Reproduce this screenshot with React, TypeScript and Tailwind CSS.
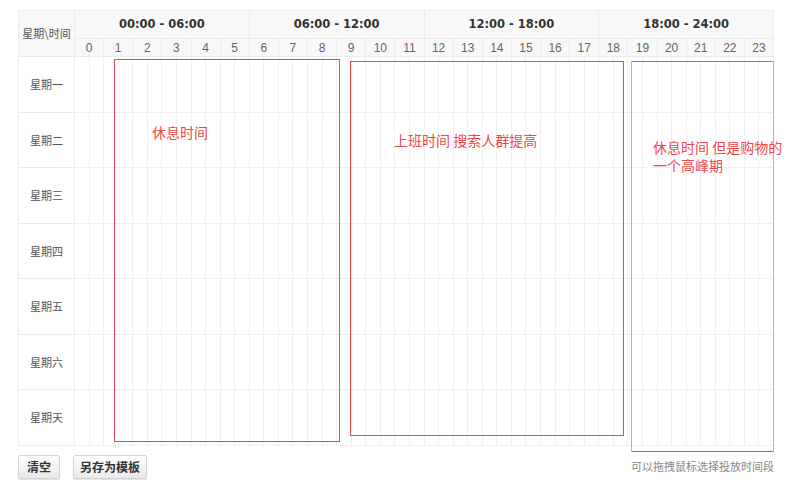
import React from 'react';

const cjk = "font-['Noto_Sans_CJK_SC',sans-serif]";

const ranges = ['00:00 - 06:00', '06:00 - 12:00', '12:00 - 18:00', '18:00 - 24:00'];
const hours = Array.from({ length: 24 }, (_, i) => i);
const halves = Array.from({ length: 48 }, (_, i) => i);
const days = ['星期一', '星期二', '星期三', '星期四', '星期五', '星期六', '星期天'];

type Note = {
  box: string;
  label: string;
  lines: string[];
};

// hand-drawn marks sitting on top of the schedule grid
const notes: Note[] = [
  {
    box: 'left-[114px] top-[59px] w-[226px] h-[383px] shadow-[inset_0_0_0_1px_#e8474b]',
    label: 'left-[152px] top-[123px]',
    lines: ['休息时间'],
  },
  {
    box: 'left-[350px] top-[61px] w-[274px] h-[375px] shadow-[inset_0_0_0_1px_#e8474b]',
    label: 'left-[394px] top-[131px]',
    lines: ['上班时间 搜索人群提高'],
  },
  {
    box: 'left-[631px] top-[61px] w-[143px] h-[391px] shadow-[inset_1px_0_0_#f29a9a,inset_-1px_0_0_#f29a9a,inset_0_1px_0_#ea5a5e,inset_0_-1px_0_#e8474b]',
    label: 'left-[653px] top-[138px]',
    lines: ['休息时间 但是购物的', '一个高峰期'],
  },
];

const ScheduleGrid: React.FC = () => (
  <div className="grid w-[756px] grid-cols-[56px_repeat(48,minmax(0,1fr))] grid-rows-[28px_18px_repeat(7,55.5px)] border-l border-t border-[#ebebeb]">
    <div
      className={`${cjk} row-span-2 flex items-center justify-center border-b border-r border-[#ebebeb] bg-[#f8f8f8] text-[11px] text-[#555]`}
    >
      星期\时间
    </div>
    {ranges.map((r) => (
      <div
        key={r}
        className="col-span-12 flex items-center justify-center border-b border-r border-[#ebebeb] bg-[#f8f8f8] font-['DejaVu_Sans',sans-serif] text-[11.5px] font-bold text-[#333]"
      >
        {r}
      </div>
    ))}
    {hours.map((h) => (
      <div
        key={h}
        className="col-span-2 flex items-center justify-center border-b border-r border-[#ebebeb] bg-[#f8f8f8] font-['Liberation_Sans',sans-serif] text-[12px] text-[#666]"
      >
        {h}
      </div>
    ))}
    {days.map((d) => (
      <React.Fragment key={d}>
        <div
          className={`${cjk} flex items-center justify-center border-b border-r border-[#ebebeb] bg-white text-[11px] text-[#555]`}
        >
          {d}
        </div>
        {halves.map((c) => (
          <div key={c} className="border-b border-r border-[#f0f0f0] bg-white" />
        ))}
      </React.Fragment>
    ))}
  </div>
);

export default function App() {
  return (
    <div className="relative h-[484px] w-[801px] overflow-hidden bg-white pl-[18px] pt-[10px]">
      <ScheduleGrid />

      <div className="mt-[9px] flex w-[756px] items-center justify-between">
        <div className="flex gap-[13px]">
          <button
            className={`${cjk} h-[24px] w-[42px] rounded-[2px] border border-[#d4d4d4] bg-gradient-to-b from-[#fdfdfd] to-[#e9e9e9] text-[12px] font-semibold text-[#333] shadow-[0_1px_1px_rgba(0,0,0,0.12)]`}
          >
            清空
          </button>
          <button
            className={`${cjk} h-[24px] w-[74px] rounded-[2px] border border-[#d4d4d4] bg-gradient-to-b from-[#fdfdfd] to-[#e9e9e9] text-[12px] font-semibold text-[#333] shadow-[0_1px_1px_rgba(0,0,0,0.12)]`}
          >
            另存为模板
          </button>
        </div>
        <span className={`${cjk} text-[11px] text-[#888]`}>可以拖拽鼠标选择投放时间段</span>
      </div>

      {notes.map((n, i) => (
        <React.Fragment key={i}>
          <div className={`pointer-events-none absolute ${n.box}`} />
          <div
            className={`${cjk} pointer-events-none absolute whitespace-nowrap text-[14px] leading-[18px] text-[#f0474b] ${n.label}`}
          >
            {n.lines.map((l) => (
              <div key={l}>{l}</div>
            ))}
          </div>
        </React.Fragment>
      ))}
    </div>
  );
}
